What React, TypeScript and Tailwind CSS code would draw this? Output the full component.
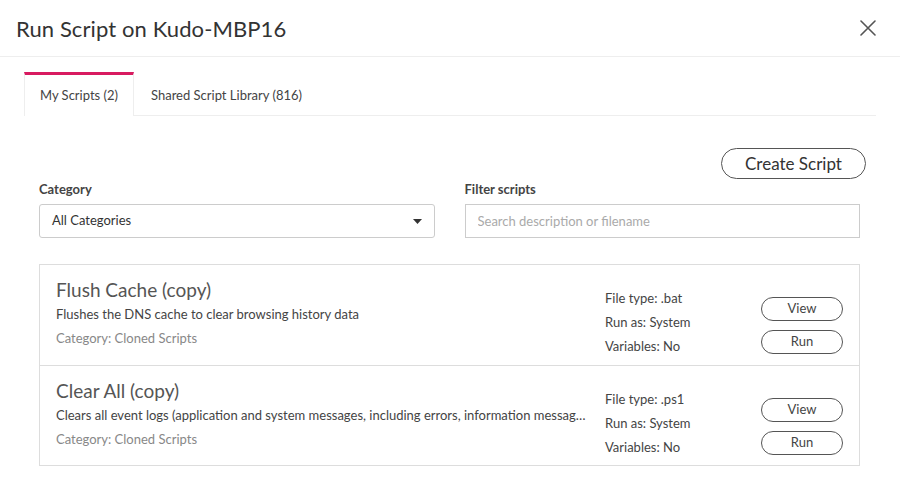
import { useState } from "react";

const scripts = [
  {
    name: "Flush Cache (copy)",
    desc: "Flushes the DNS cache to clear browsing history data",
    category: "Cloned Scripts",
    fileType: ".bat",
    runAs: "System",
    variables: "No",
  },
  {
    name: "Clear All (copy)",
    desc: "Clears all event logs (application and system messages, including errors, information messages and warnings)",
    category: "Cloned Scripts",
    fileType: ".ps1",
    runAs: "System",
    variables: "No",
  },
];

export default function App() {
  const [tab, setTab] = useState(0);

  return (
    <div className="w-[900px] h-[501px] bg-white text-[#444] font-['Source_Sans_Pro','Lato',sans-serif] overflow-hidden">
      {/* header */}
      <div className="h-[57px] flex items-center justify-between pl-4 pr-6 border-b border-[#eee]">
        <h1 className="text-[22px] text-[#333] tracking-[0.1px]">Run Script on Kudo-MBP16</h1>
        <button className="text-[#555]">
          <svg width="16" height="16" viewBox="0 0 16 16" fill="none" stroke="currentColor" strokeWidth="1.6" strokeLinecap="round">
            <path d="M1 1L15 15M15 1L1 15" />
          </svg>
        </button>
      </div>

      <div className="px-6 pt-[15px]">
        {/* tabs */}
        <div className="flex border-b border-[#eee] h-[44px]">
          <button
            onClick={() => setTab(0)}
            className={`w-[110px] h-[44px] text-[13px] text-[#444] border-t-[3px] border-x ${tab === 0 ? "border-t-[#d81b60] border-x-[#eee] bg-white" : "border-transparent"}`}
          >
            My Scripts (2)
          </button>
          <button
            onClick={() => setTab(1)}
            className={`px-4 h-[44px] text-[13px] text-[#444] border-t-[3px] border-x ${tab === 1 ? "border-t-[#d81b60] border-x-[#eee]" : "border-transparent"}`}
          >
            Shared Script Library (816)
          </button>
        </div>

        <div className="pl-[15px] pr-[16px]">
          <div className="flex justify-end pt-[32px] -mr-[6px]">
            <button className="w-[145px] h-[31px] rounded-full border border-[#555] text-[17px] text-[#333]">
              Create Script
            </button>
          </div>

          {/* filters */}
          <div className="grid grid-cols-2 gap-[30px]">
            <div>
              <label className="block text-[13px] font-bold text-[#444] leading-[20px] mb-[5px]">Category</label>
              <div className="h-[34px] border border-[#ccc] rounded-[3px] flex items-center justify-between pl-3 pr-[12px]">
                <span className="text-[13px] text-[#333]">All Categories</span>
                <svg width="9" height="5" viewBox="0 0 9 5">
                  <path d="M0 0H9L4.5 5Z" fill="#333" />
                </svg>
              </div>
            </div>
            <div>
              <label className="block text-[13px] font-bold text-[#444] leading-[20px] mb-[5px]">Filter scripts</label>
              <input
                placeholder="Search description or filename"
                className="w-full h-[34px] border border-[#ccc] px-3 text-[13px] outline-none placeholder:text-[#aaa]"
              />
            </div>
          </div>

          {/* list */}
          <div className="mt-[26px] border border-[#ddd]">
            {scripts.map((s, i) => (
              <div key={s.name} className={`h-[100px] flex ${i > 0 ? "border-t border-[#ddd]" : ""}`}>
                <div className="flex-1 min-w-0 pl-4 pr-4 pt-[12px]">
                  <div className="text-[19px] text-[#555] leading-[25px]">{s.name}</div>
                  <div className="text-[13px] text-[#444] leading-[24px] truncate">{s.desc}</div>
                  <div className="text-[13px] text-[#888] leading-[24px]">Category: {s.category}</div>
                </div>
                <div className="w-[156px] pt-[21px] text-[13px] text-[#444] leading-[24px]">
                  <div>File type: {s.fileType}</div>
                  <div>Run as: {s.runAs}</div>
                  <div>Variables: {s.variables}</div>
                </div>
                <div className="w-[98px] pr-[16px] pt-[32px] flex flex-col gap-[9px]">
                  <button className="h-[24px] rounded-full border border-[#555] text-[13px] text-[#444]">View</button>
                  <button className="h-[24px] rounded-full border border-[#555] text-[13px] text-[#444]">Run</button>
                </div>
              </div>
            ))}
          </div>
        </div>
      </div>
    </div>
  );
}
